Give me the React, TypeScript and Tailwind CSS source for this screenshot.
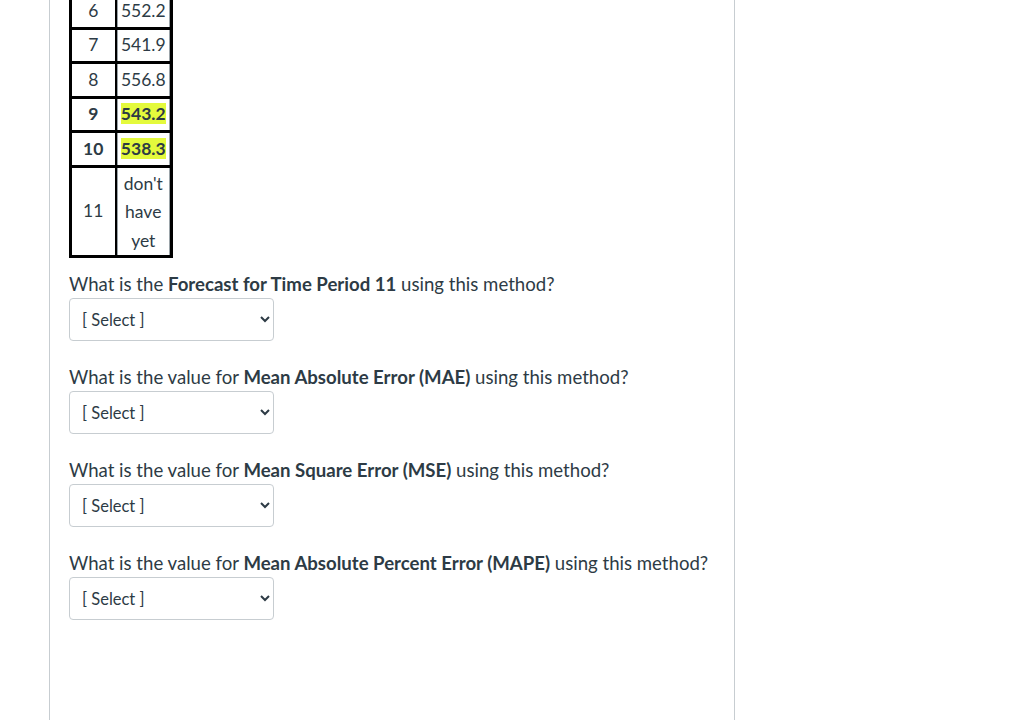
import React from 'react'

const rows = [
  { period: '6', value: '552.2' },
  { period: '7', value: '541.9' },
  { period: '8', value: '556.8' },
  { period: '9', value: '543.2', mark: true },
  { period: '10', value: '538.3', mark: true },
]

const questions = [
  { before: 'What is the ', bold: 'Forecast for Time Period 11', after: ' using this method?' },
  { before: 'What is the value for ', bold: 'Mean Absolute Error (MAE)', after: ' using this method?' },
  { before: 'What is the value for ', bold: 'Mean Square Error (MSE)', after: ' using this method?' },
  { before: 'What is the value for ', bold: 'Mean Absolute Percent Error (MAPE)', after: ' using this method?' },
]

function DataTable() {
  return (
    <table className="border-collapse border-[3px] border-black mt-[-8px] text-[17.5px] text-[#2d3b45]">
      <tbody>
        {rows.map((r) => (
          <tr key={r.period} className="h-[34.5px]">
            <td
              className={`w-[45px] p-0 border-[3px] border-r-2 border-black text-center ${
                r.mark ? 'font-bold' : ''
              }`}
            >
              {r.period}
            </td>
            <td className="w-[56px] p-0 border-[3px] border-l-2 border-black text-center shadow-[inset_1px_0_0_#9aa3a8,inset_-1px_0_0_#9aa3a8]">
              {r.mark ? (
                <span className="bg-[#e4fa3c] font-bold">{r.value}</span>
              ) : (
                r.value
              )}
            </td>
          </tr>
        ))}
        <tr>
          <td className="p-0 border-[3px] border-r-2 border-black text-center">11</td>
          <td className="p-0 border-[3px] border-l-2 border-black text-center leading-[28.5px] pt-[2px] pb-0 shadow-[inset_1px_0_0_#9aa3a8,inset_-1px_0_0_#9aa3a8]">
            don't
            <br />
            have
            <br />
            yet
          </td>
        </tr>
      </tbody>
    </table>
  )
}

export default function App() {
  return (
    <div
      className="h-[720px] overflow-hidden bg-white text-[#2d3b45]"
      style={{ fontFamily: 'Lato, "Open Sans", sans-serif' }}
    >
      <div className="flow-root ml-[49px] w-[686px] h-[720px] border-x border-[#c7cdd1] pl-[19px]">
        <DataTable />
        <div className="mt-[13px] flex flex-col gap-[23px]">
          {questions.map((q, i) => (
            <div key={i} className="flex flex-col gap-[1px]">
              <p className="text-[18.6px] leading-[26px]">
                {q.before}
                <strong className="font-bold">{q.bold}</strong>
                {q.after}
              </p>
              <select
                defaultValue=""
                className="w-[205px] h-[43px] border border-[#c7cdd1] rounded-[4px] pl-[8px] pr-[4px] text-[16.5px] text-[#2d3b45] bg-white"
              >
                <option value="">[ Select ]</option>
              </select>
            </div>
          ))}
        </div>
      </div>
    </div>
  )
}
